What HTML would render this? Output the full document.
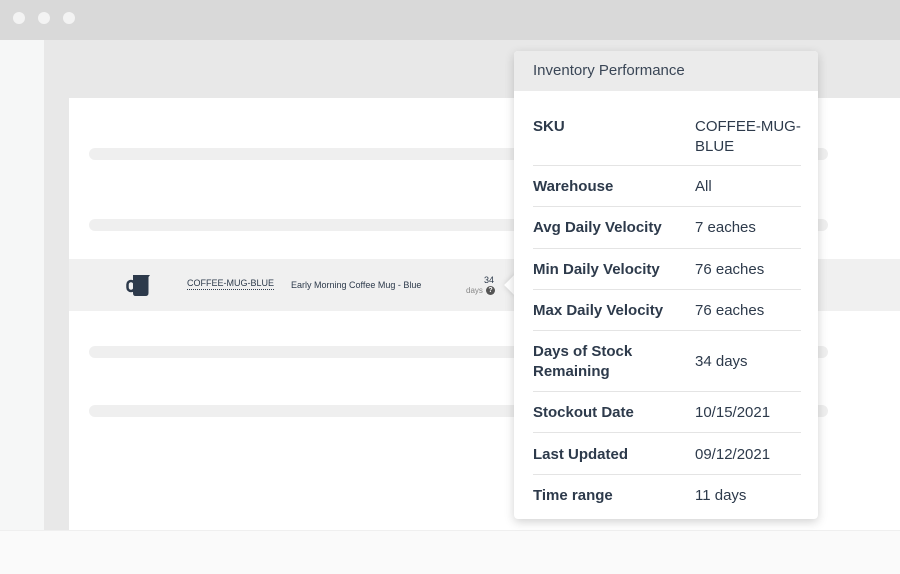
<!DOCTYPE html>
<html><head><style>
*{margin:0;padding:0;box-sizing:border-box}
body{width:900px;height:574px;position:relative;overflow:hidden;background:#fafafa;font-family:"Liberation Sans",sans-serif;color:#2d3a4b}
.a{position:absolute}
.bar{position:absolute;left:89px;width:739px;height:12px;border-radius:6px;background:#efefef}
.row{position:absolute;left:533px;width:268px;border-bottom:1px solid #e4e4e4;font-size:15px;line-height:20px}
.row b{position:absolute;left:0;top:2px;font-weight:bold}
.row span{position:absolute;left:162px;top:2px}
</style></head><body>
<div class="a" style="left:0;top:0;width:900px;height:40px;background:#d9d9d9"></div>
<div class="a" style="left:13px;top:12px;width:12px;height:12px;border-radius:50%;background:#f3f3f3"></div>
<div class="a" style="left:38px;top:12px;width:12px;height:12px;border-radius:50%;background:#f3f3f3"></div>
<div class="a" style="left:63px;top:12px;width:12px;height:12px;border-radius:50%;background:#f3f3f3"></div>
<div class="a" style="left:0;top:40px;width:44px;height:490px;background:#f6f7f7"></div>
<div class="a" style="left:44px;top:40px;width:856px;height:490px;background:#e8e8e8"></div>
<div class="a" style="left:69px;top:98px;width:831px;height:432px;background:#fff"></div>
<div class="a" style="left:0;top:530px;width:900px;height:44px;background:#fafafa;border-top:1px solid #efefef"></div>
<div class="bar" style="top:148px"></div>
<div class="bar" style="top:219px"></div>
<div class="bar" style="top:346px"></div>
<div class="bar" style="top:405px"></div>
<div class="a" style="left:69px;top:259px;width:831px;height:52px;background:#f0f0f0"></div>
<svg class="a" style="left:124px;top:272px" width="30" height="26" viewBox="0 0 30 26"><rect x="3.5" y="9" width="7" height="10" rx="3.5" fill="none" stroke="#2d3a4b" stroke-width="2.5"/><path d="M9 3 h17 l-1.5 2 v16 q0 3 -3 3 h-10 q-2.5 0 -2.5 -3z" fill="#2d3a4b"/></svg>
<div class="a" style="left:187px;top:278px;font-size:9px;border-bottom:1px dotted #2d3a4b;line-height:11px">COFFEE-MUG-BLUE</div>
<div class="a" style="left:291px;top:280px;font-size:9px">Early Morning Coffee Mug - Blue</div>
<div class="a" style="left:484px;top:275px;font-size:9px">34</div>
<div class="a" style="left:466px;top:286px;font-size:8px;color:#888">days</div>
<div class="a" style="left:486px;top:286px;width:9px;height:9px;border-radius:50%;background:#555;color:#fff;font-size:7px;text-align:center;line-height:9px;font-weight:bold">?</div>
<div class="a" style="left:507px;top:278px;width:14px;height:14px;background:#fff;transform:rotate(45deg);box-shadow:0 0 6px rgba(0,0,0,.15)"></div>
<div class="a" style="left:514px;top:51px;width:304px;height:468px;background:#fff;border-radius:4px;box-shadow:0 3px 10px rgba(0,0,0,.18);overflow:hidden">
<div style="height:40px;background:#ebebeb;font-size:15px;line-height:40px;padding-left:19px;color:#3a4656">Inventory Performance</div>
</div>
<div class="row" style="top:115px;height:51px"><b>SKU</b><span>COFFEE-MUG-<br>BLUE</span></div>
<div class="row" style="top:175px;height:32px"><b>Warehouse</b><span>All</span></div>
<div class="row" style="top:216px;height:33px"><b>Avg Daily Velocity</b><span>7 eaches</span></div>
<div class="row" style="top:258px;height:32px"><b>Min Daily Velocity</b><span>76 eaches</span></div>
<div class="row" style="top:299px;height:32px"><b>Max Daily Velocity</b><span>76 eaches</span></div>
<div class="row" style="top:340px;height:52px"><b>Days of Stock<br>Remaining</b><span style="top:12px">34 days</span></div>
<div class="row" style="top:401px;height:32px"><b>Stockout Date</b><span>10/15/2021</span></div>
<div class="row" style="top:443px;height:32px"><b>Last Updated</b><span>09/12/2021</span></div>
<div class="row" style="top:484px;height:20px;border:none"><b>Time range</b><span>11 days</span></div>
</body></html>
